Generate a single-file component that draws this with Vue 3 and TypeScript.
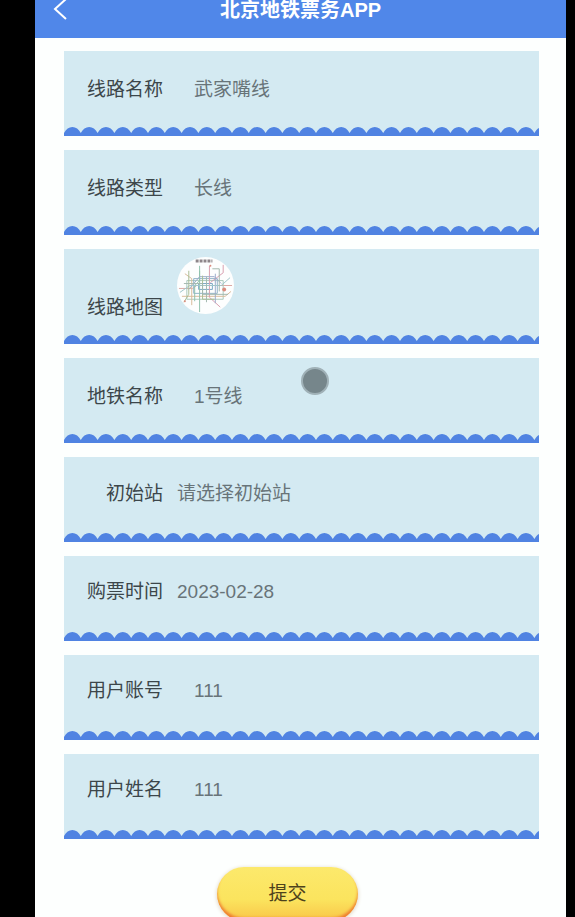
<script setup lang="ts">
import { ref } from 'vue'

interface Field {
  id: string
  label: string
  kind: 'text' | 'map' | 'select' | 'date'
  value: string
}

const fields = ref<Field[]>([
  { id: 'line-name', label: '线路名称', kind: 'text', value: '武家嘴线' },
  { id: 'line-type', label: '线路类型', kind: 'text', value: '长线' },
  { id: 'line-map', label: '线路地图', kind: 'map', value: '' },
  { id: 'metro-name', label: '地铁名称', kind: 'text', value: '1号线' },
  { id: 'start-station', label: '初始站', kind: 'select', value: '' },
  { id: 'buy-date', label: '购票时间', kind: 'date', value: '2023-02-28' },
  { id: 'account', label: '用户账号', kind: 'text', value: '111' },
  { id: 'user-name', label: '用户姓名', kind: 'text', value: '111' },
])

// Scalloped edge: a row of arcs standing on a solid base line.
const step = 16.8
let edge = 'M0 9V6'
for (let i = 0; i < 29; i++) {
  const x = i * step
  edge += `C${x + 2} 2 ${x + 5} 0 ${x + step / 2} 0S${x + step - 2} 2 ${x + step} 6`
}
edge += 'V9Z'
</script>

<template>
  <div class="stage">
    <main class="app">
      <header class="bar">
        <button class="back" type="button" aria-label="返回">
          <svg viewBox="0 0 16 22" width="16" height="22">
            <path d="M14 0L3 10L14 20" fill="none" stroke="#fff" stroke-width="2" />
          </svg>
        </button>
        <h1>北京地铁票务APP</h1>
      </header>

      <form class="form" @submit.prevent>
        <div v-for="f in fields" :key="f.id" class="card">
          <div class="row" :class="f.kind">
            <label :for="f.id">{{ f.label }}</label>
            <button v-if="f.kind === 'map'" :id="f.id" class="map-btn" type="button">
              <svg class="map-pic" viewBox="0 0 58 58">
                <circle cx="29" cy="29" r="29" fill="#fdfefe" />
                <g fill="none" stroke-width="1">
                  <path d="M2 32H16L20 29H56" stroke="#dba7a3" />
                  <path d="M10 24H47V43H10Z" stroke="#a9c9bc" />
                  <path d="M17 22H41V37H17Z" stroke="#91b3c8" />
                  <path d="M22 27H36V33H22Z" stroke="#78a6c5" />
                  <path d="M8 17L15 22V49M5 40H49L55 35" stroke="#d8bb9a" />
                  <path d="M23 9V24L18 29V45M23 14V56" stroke="#8fc2ac" />
                  <path d="M33 9V41L44 51M34 26L47 16V8" stroke="#d89eaf" />
                  <path d="M39 17V47M12 33L23 20H38L45 27" stroke="#9daccb" />
                  <path d="M3 36L13 29H45L54 21" stroke="#9fc6ca" />
                  <path d="M12 14V38L7 46M26 19V43H38" stroke="#a8bd94" />
                  <path d="M7 27H26V38H52M30 20V46M36 12H43V35" stroke="#a3b8ae" />
                </g>
                <path d="M19 4H36" stroke="#8d8589" stroke-width="3" stroke-dasharray="3 1" />
                <g fill="#db8c7e">
                  <circle cx="48" cy="33" r="2" />
                  <circle cx="34" cy="9" r="1" />
                  <circle cx="8" cy="45" r="1" />
                </g>
              </svg>
            </button>
            <select v-else-if="f.kind === 'select'" :id="f.id" v-model="f.value">
              <option value="">请选择初始站</option>
            </select>
            <input v-else :id="f.id" v-model="f.value" type="text" />
          </div>
          <svg class="edge" viewBox="0 0 475 9" preserveAspectRatio="none">
            <path :d="edge" fill="#5083e2" />
          </svg>
          <span v-if="f.id === 'metro-name'" class="touch"></span>
        </div>
        <button class="submit" type="submit">提交</button>
      </form>
    </main>
  </div>
</template>

<style>
body {
  background: #000;
}
</style>

<style scoped>
.stage {
  box-sizing: border-box;
  height: 100vh;
  overflow: hidden;
  padding: 0 9px 0 35px;
  background: #000;
  font-family: "Liberation Sans", "Noto Sans CJK SC", sans-serif;
  font-size: 19px;
}
.app {
  min-height: 100%;
  background: #fdfffe;
}
button,
input,
select {
  margin: 0;
  padding: 0;
  border: 0;
  background: none;
  font: inherit;
}
.bar {
  display: grid;
  grid-template-columns: 48px 1fr 48px;
  align-items: start;
  height: 38px;
  background: #5087e9;
}
.back {
  display: flex;
  padding-left: 17px;
  height: 20px;
  align-items: center;
}
h1 {
  margin: 0;
  color: #fff;
  font-size: 20px;
  line-height: 20px;
  font-weight: 700;
  text-align: center;
}
.form {
  display: flex;
  flex-direction: column;
  gap: 14px;
  padding: 13px 27px 0 29px;
}
.card {
  position: relative;
  display: flex;
  flex-direction: column;
  background: #d4eaf2;
}
.row {
  display: flex;
  align-items: baseline;
  gap: 14px;
  height: 76px;
  box-sizing: border-box;
  padding: 22px 22px 0;
}
.row label {
  flex: none;
  width: 77px;
  color: #3c464a;
  line-height: 28px;
  text-align: right;
}
.row input,
.row select {
  flex: 1;
  min-width: 0;
  height: 28px;
  color: #687479;
  appearance: none;
}
.text input {
  padding-left: 17px;
}
.row.map {
  align-items: flex-end;
  height: 86px;
  padding: 8px 22px 13px;
}
.map-btn {
  display: flex;
  align-self: flex-start;
}
.map-pic {
  width: 57px;
  height: 57px;
}
.edge {
  display: block;
  width: 100%;
  height: 9px;
}
.touch {
  position: absolute;
  left: 237px;
  top: 9px;
  width: 24px;
  height: 24px;
  border: 2px solid #a0b1b7;
  border-radius: 50%;
  background: #76868b;
}
.submit {
  align-self: center;
  width: 141px;
  height: 54px;
  flex: none;
  margin: 14px 28px 0 0;
  border-radius: 27px;
  background: linear-gradient(#fce96c, #fbe45e 60%, #f9c548);
  box-shadow: inset 0 -3px 3px #ee7b30, 0 1px 4px #d9cdbb;
  color: #4d421c;
  line-height: 50px;
}
</style>
